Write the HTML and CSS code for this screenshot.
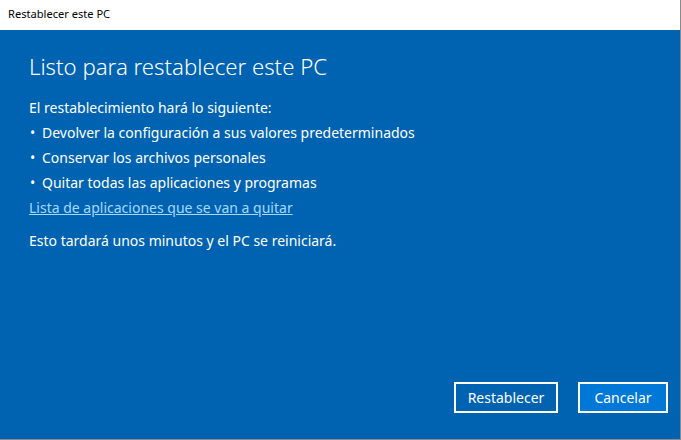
FILE: index.html
```html
<!DOCTYPE html>
<html lang="es">
<head>
<meta charset="utf-8">
<title>Restablecer este PC</title>
<link rel="stylesheet" href="styles.css">
</head>
<body>
<div class="window">
  <div class="titlebar">Restablecer este PC</div>
  <div class="content">
    <h1 class="heading">Listo para restablecer este PC</h1>
    <p class="intro">El restablecimiento hará lo siguiente:</p>
    <ul class="list">
      <li>Devolver la configuración a sus valores predeterminados</li>
      <li>Conservar los archivos personales</li>
      <li>Quitar todas las aplicaciones y programas</li>
    </ul>
    <a class="link" href="#">Lista de aplicaciones que se van a quitar</a>
    <p class="note">Esto tardará unos minutos y el PC se reiniciará.</p>
    <div class="spacer"></div>
    <div class="actions">
      <button class="btn btn-reset">Restablecer</button>
      <button class="btn btn-primary">Cancelar</button>
    </div>
  </div>
</div>
</body>
</html>
```

FILE: styles.css
```css
html, body {
  margin: 0;
  padding: 0;
  background: #ffffff;
}
body {
  font-family: "Noto Sans", "Open Sans", sans-serif;
}
.window {
  width: 680px;
  height: 439px;
  border-right: 1px solid #8a8a8a;
  border-bottom: 1px solid #8a8a8a;
  display: flex;
  flex-direction: column;
}
.titlebar {
  height: 30px;
  box-sizing: border-box;
  padding: 6px 0 0 8px;
  font-size: 11.1px;
  line-height: 16px;
  color: #000;
  background: #fff;
}
.content {
  flex: 1;
  background: #0063b1;
  color: #fff;
  padding: 20px 12px 26px 29px;
  display: flex;
  flex-direction: column;
}
.heading {
  margin: 0;
  font-size: 22.2px;
  font-weight: 300;
  line-height: 34px;
}
.intro {
  margin: 11px 0 0;
  font-size: 14px;
  line-height: 25px;
}
.list {
  margin: 0;
  padding: 0;
  list-style: none;
  font-size: 14px;
  line-height: 25px;
}
.list li {
  position: relative;
  padding-left: 13px;
}
.list li::before {
  content: "•";
  position: absolute;
  left: 1px;
  font-size: 14px;
}
.link {
  align-self: flex-start;
  font-size: 14px;
  line-height: 25px;
  color: #a6d8ff;
  text-decoration: underline;
}
.note {
  margin: 8px 0 0;
  font-size: 14px;
  line-height: 25px;
}
.spacer {
  flex: 1;
}
.actions {
  display: flex;
  justify-content: flex-end;
  gap: 20px;
}
.btn {
  height: 31px;
  box-sizing: border-box;
  border: 2px solid #fff;
  background: #0063b1;
  color: #fff;
  font-family: inherit;
  font-size: 14px;
  padding: 0;
}
.btn-reset { width: 104px; }
.btn-primary {
  width: 90px;
  background: #0078d7;
}
```
